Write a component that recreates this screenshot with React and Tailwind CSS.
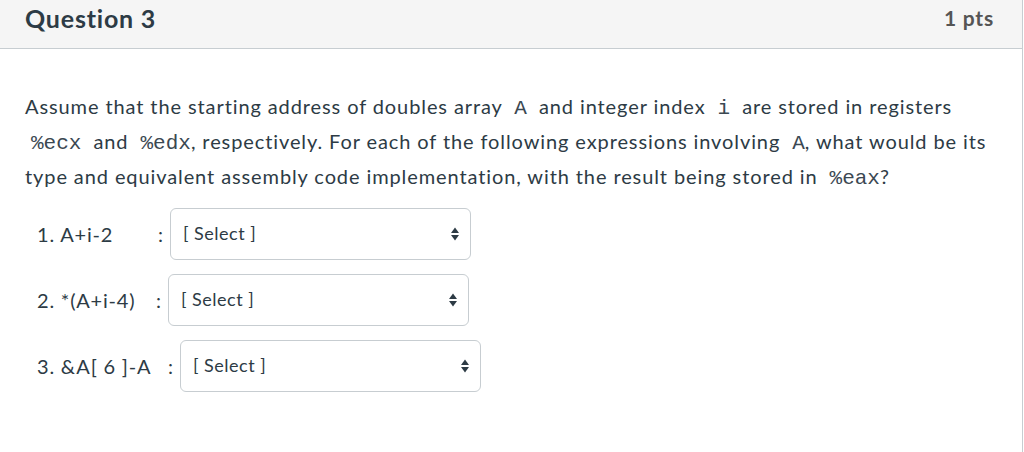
export default function App() {
  const mono = "font-['Liberation_Mono',monospace] text-[21px] leading-none tracking-normal text-[#3b4852]";
  const code = `${mono} mx-[6px]`;
  const codeTight = `${mono} ml-[6px]`;
  const rows = [
    { label: "1. A+i-2", lw: "w-[121px]" },
    { label: "2. *(A+i-4)", lw: "w-[119px]" },
    { label: "3. &A[ 6 ]-A", lw: "w-[131px]" },
  ];
  return (
    <div className="w-[1023px] h-[452px] bg-white border-r border-[#c7cdd1] font-['Lato',sans-serif] text-[#2d3b45]">
      <div className="h-[49px] bg-[#f5f5f5] border-b border-[#c7cdd1] flex items-center justify-between pl-[25px] pr-[28px]">
        <h2 className="text-[25px] font-bold leading-none tracking-[0.8px] -mt-[12px]">Question 3</h2>
        <span className="text-[21px] font-bold text-[#555] tracking-[0.8px] -mt-[12px]">1 pts</span>
      </div>
      <div className="pl-[25px] pr-[20px] pt-[40px]">
        <p className="text-[20px] leading-[35px] tracking-[0.9px]">
          Assume that the starting address of doubles array <span className={code}>A</span> and integer index{" "}
          <span className={code}>i</span> are stored in registers <span className={code}>%ecx</span> and{" "}
          <span className={codeTight}>%edx</span>, respectively. For each of the following expressions involving{" "}
          <span className={codeTight}>A</span>, what would be its type and equivalent assembly code implementation, with the result being stored in{" "}
          <span className={codeTight}>%eax</span>?
        </p>
        <div className="mt-[14px] flex flex-col gap-[14px] pl-[12px]">
          {rows.map((r) => (
            <div key={r.label} className="flex items-center text-[20px] tracking-[0.8px]">
              <span className={`${r.lw} shrink-0`}>{r.label}</span>
              <span className="w-[12px] shrink-0">:</span>
              <div className="w-[301px] h-[52px] border border-[#c7cdd1] rounded-[6px] bg-white flex items-center justify-between pl-[12px] pr-[10px]">
                <span className="text-[18px] tracking-[0.5px] -mt-[1px]">[ Select ]</span>
                <svg width="10" height="16" viewBox="0 0 10 16">
                  <path d="M5 1.5 L9 7 L1 7 Z" fill="#2d3b45" />
                  <path d="M1 9 L9 9 L5 14.5 Z" fill="#2d3b45" />
                </svg>
              </div>
            </div>
          ))}
        </div>
      </div>
    </div>
  );
}
